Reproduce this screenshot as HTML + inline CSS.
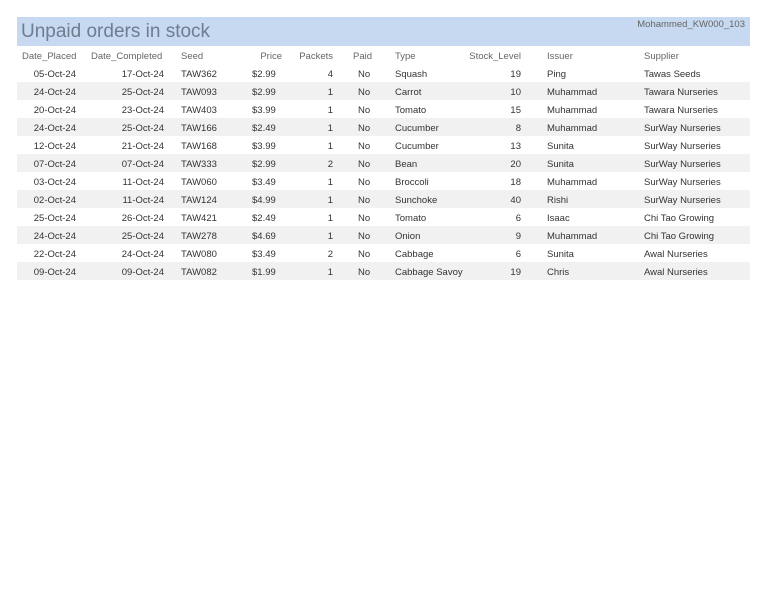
<!DOCTYPE html>
<html><head><style>
body{margin:0;width:768px;height:594px;background:#fff;position:relative;font-family:"Liberation Sans",sans-serif;color:#333;font-size:9.5px;overflow:hidden}
.hb{position:absolute;left:17px;top:17px;width:733px;height:29px;background:#c6d9f0}
.t{position:absolute;left:21px;top:21px;font-size:19px;color:#6e7d8f}
.u{position:absolute;right:23px;top:19px;font-size:9.5px;color:#666}
.r{position:absolute;left:17px;width:733px;height:18px}
.r.g{background:#f1f1f1}
.c{position:absolute;top:5px;white-space:nowrap}
.h .c{color:#666}
.R{text-align:right}
</style></head><body>
<div class="hb"></div><div class="t">Unpaid orders in stock</div><div class="u">Mohammed_KW000_103</div>
<div id="rows"></div>
<script>
var d=[["Date_Placed","Date_Completed","Seed","Price","Packets","Paid","Type","Stock_Level","Issuer","Supplier"],
["05-Oct-24","17-Oct-24","TAW362","$2.99","4","No","Squash","19","Ping","Tawas Seeds"],
["24-Oct-24","25-Oct-24","TAW093","$2.99","1","No","Carrot","10","Muhammad","Tawara Nurseries"],
["20-Oct-24","23-Oct-24","TAW403","$3.99","1","No","Tomato","15","Muhammad","Tawara Nurseries"],
["24-Oct-24","25-Oct-24","TAW166","$2.49","1","No","Cucumber","8","Muhammad","SurWay Nurseries"],
["12-Oct-24","21-Oct-24","TAW168","$3.99","1","No","Cucumber","13","Sunita","SurWay Nurseries"],
["07-Oct-24","07-Oct-24","TAW333","$2.99","2","No","Bean","20","Sunita","SurWay Nurseries"],
["03-Oct-24","11-Oct-24","TAW060","$3.49","1","No","Broccoli","18","Muhammad","SurWay Nurseries"],
["02-Oct-24","11-Oct-24","TAW124","$4.99","1","No","Sunchoke","40","Rishi","SurWay Nurseries"],
["25-Oct-24","26-Oct-24","TAW421","$2.49","1","No","Tomato","6","Isaac","Chi Tao Growing"],
["24-Oct-24","25-Oct-24","TAW278","$4.69","1","No","Onion","9","Muhammad","Chi Tao Growing"],
["22-Oct-24","24-Oct-24","TAW080","$3.49","2","No","Cabbage","6","Sunita","Awal Nurseries"],
["09-Oct-24","09-Oct-24","TAW082","$1.99","1","No","Cabbage Savoy","19","Chris","Awal Nurseries"]];
var hc=[[5,null],[74,null],[164,null],[null,265],[null,316],[336,null],[378,null],[null,504],[530,null],[627,null]];
var vc=[[null,59],[null,147],[164,null],[235,null],[null,316],[341,null],[378,null],[null,504],[530,null],[627,null]];
var h="";
d.forEach(function(r,i){
 var top=i==0?46:64+(i-1)*18;
 h+='<div class="r'+(i==0?' h':'')+(i>0&&i%2==0?' g':'')+'" style="top:'+top+'px">';
 var cs=i==0?hc:vc;
 r.forEach(function(v,j){var c=cs[j];
  if(c[0]!=null)h+='<div class="c" style="left:'+c[0]+'px">'+v+'</div>';
  else h+='<div class="c R" style="right:'+(733-c[1])+'px">'+v+'</div>';});
 h+='</div>';});
document.getElementById("rows").innerHTML=h;
</script>
</body></html>
